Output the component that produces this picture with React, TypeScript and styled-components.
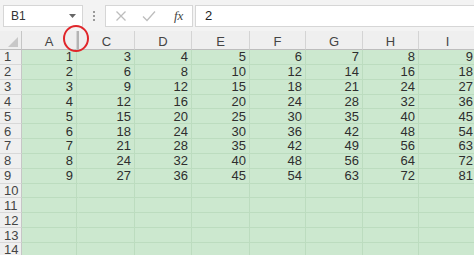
import React from "react";
import styled, { createGlobalStyle } from "styled-components";

const Global = createGlobalStyle`
  html, body { margin: 0; padding: 0; overflow: hidden; background: #f3f3f3; }
  body { font-family: "Liberation Sans", Arial, sans-serif; }
`;

const Frame = styled.div`
  position: relative;
  width: 474px;
  height: 255px;
  overflow: hidden;
  background: #f3f3f3;
`;

const FormulaBar = styled.div`
  display: flex;
  align-items: center;
  height: 31px;
  padding: 0 0 0 3px;
  box-sizing: border-box;
  background: #f3f3f3;
`;

const NameBox = styled.div`
  display: flex;
  align-items: center;
  justify-content: space-between;
  width: 80px;
  height: 22px;
  box-sizing: border-box;
  padding: 0 6px 0 7px;
  background: #fff;
  border: 1px solid #d6d6d6;
  font-size: 12px;
  color: #333;
`;

const Grip = styled.div`
  display: flex;
  flex-direction: column;
  gap: 2px;
  margin: 0 10px 0 10px;
  span { width: 2px; height: 2px; background: #9a9a9a; }
`;

const FuncBox = styled.div`
  display: flex;
  align-items: center;
  width: 88px;
  height: 22px;
  box-sizing: border-box;
  background: #fff;
  border: 1px solid #d6d6d6;
  padding-left: 9px;
  gap: 15px;
`;

const FxText = styled.span`
  font-family: "Liberation Serif", serif;
  font-style: italic;
  font-size: 13px;
  color: #444;
  margin-left: 3px;
`;

const Input = styled.div`
  flex: 1;
  height: 22px;
  margin-left: 2px;
  box-sizing: border-box;
  background: #fff;
  border: 1px solid #d6d6d6;
  border-right: none;
  padding-left: 9px;
  display: flex;
  align-items: center;
  font-size: 13px;
  color: #222;
`;

const Sheet = styled.div`
  display: grid;
  grid-template-columns: 22px 55px 2px 56px 57px 58px 56px 57px 56px 58px;
  grid-auto-rows: 14.85px;
  grid-template-rows: 19px;
`;

const Corner = styled.div`
  position: relative;
  background: #efefef;
  border-right: 1px solid #c6c6c6;
  border-bottom: 1px solid #bdbdbd;
  box-sizing: border-box;
`;

const CornerTri = styled.div`
  position: absolute;
  right: 3px;
  bottom: 2px;
  width: 0;
  height: 0;
  border-left: 10px solid transparent;
  border-bottom: 10px solid #c8c8c8;
`;

const ColHead = styled.div<{ $hidden?: boolean }>`
  display: flex;
  align-items: center;
  justify-content: center;
  background: #efefef;
  border-right: 1px solid ${(p) => (p.$hidden ? "#b4b4b4" : "#d4d4d4")};
  border-left: ${(p) => (p.$hidden ? "1px solid #b4b4b4" : "none")};
  border-bottom: 1px solid #bdbdbd;
  box-sizing: border-box;
  font-size: 13px;
  color: #444;
  padding-top: 2px;
`;

const RowHead = styled.div`
  display: flex;
  align-items: center;
  padding-left: 4px;
  background: #efefef;
  border-right: 1px solid #c6c6c6;
  border-bottom: 1px solid #d8d8d8;
  box-sizing: border-box;
  font-size: 13px;
  color: #444;
`;

const Cell = styled.div<{ $hidden?: boolean }>`
  display: flex;
  align-items: center;
  justify-content: flex-end;
  padding-right: ${(p) => (p.$hidden ? "0" : "3px")};
  background: #cce8cf;
  border-right: 1px solid ${(p) => (p.$hidden ? "#cce8cf" : "#bcdcbf")};
  border-bottom: 1px solid #bcdcbf;
  box-sizing: border-box;
  font-size: 13px;
  color: #2e2e2e;
  overflow: hidden;
  white-space: nowrap;
`;

const Circle = styled.div`
  position: absolute;
  left: 63px;
  top: 25px;
  width: 22px;
  height: 23px;
  border: 2px solid #e0262b;
  border-radius: 50%;
`;

const cols = ["A", "B", "C", "D", "E", "F", "G", "H", "I"];
const multipliers = [1, 2, 3, 4, 5, 6, 7, 8, 9];

export default function App() {
  const rows = Array.from({ length: 14 }, (_, i) => i + 1);
  return (
    <Frame>
      <Global />
      <FormulaBar>
        <NameBox>
          <span>B1</span>
          <svg width="7" height="4" viewBox="0 0 7 4">
            <path d="M0 0h7L3.5 4z" fill="#666" />
          </svg>
        </NameBox>
        <Grip>
          <span />
          <span />
          <span />
        </Grip>
        <FuncBox>
          <svg width="12" height="12" viewBox="0 0 12 12">
            <path d="M1.5 1.5l9 9M10.5 1.5l-9 9" stroke="#bdbdbd" strokeWidth="1.3" />
          </svg>
          <svg width="14" height="12" viewBox="0 0 14 12">
            <path d="M1 6.5l4 4L13 1.5" stroke="#bdbdbd" strokeWidth="1.3" fill="none" />
          </svg>
          <FxText>fx</FxText>
        </FuncBox>
        <Input>2</Input>
      </FormulaBar>
      <Sheet>
        <Corner>
          <CornerTri />
        </Corner>
        {cols.map((c) => (
          <ColHead key={c} $hidden={c === "B"}>
            {c === "B" ? "" : c}
          </ColHead>
        ))}
        {rows.map((r) => (
          <React.Fragment key={r}>
            <RowHead>{r}</RowHead>
            {multipliers.map((m, ci) => (
              <Cell key={ci} $hidden={ci === 1}>
                {ci === 1 ? "" : r <= 9 ? r * m : ""}
              </Cell>
            ))}
          </React.Fragment>
        ))}
      </Sheet>
      <Circle />
    </Frame>
  );
}
